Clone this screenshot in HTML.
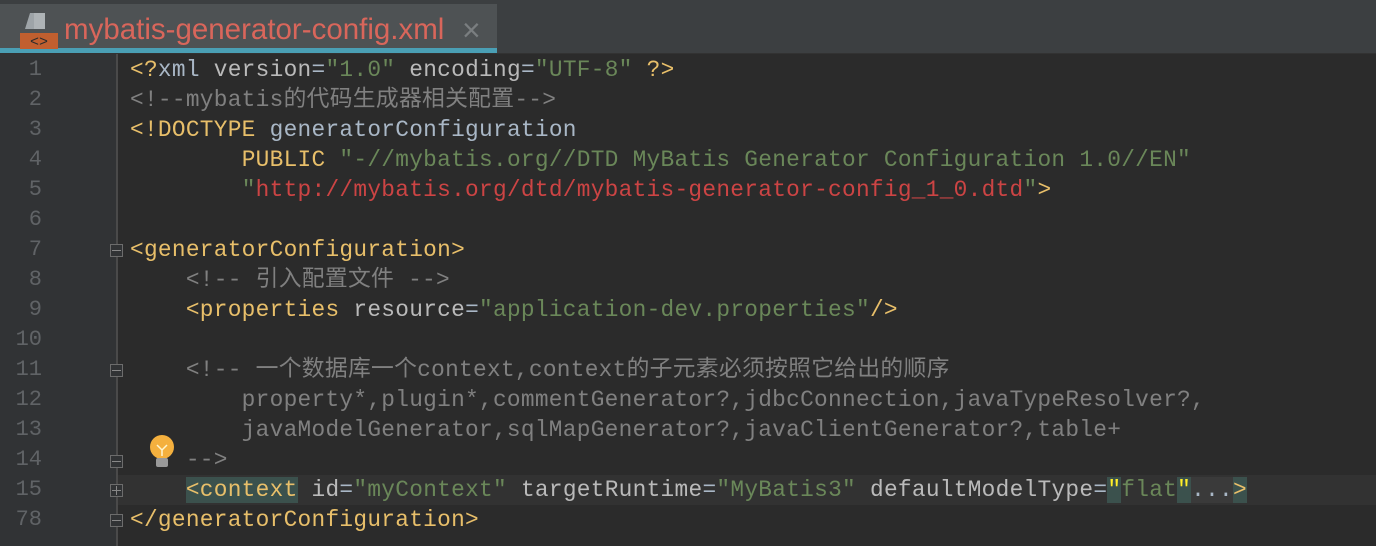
<!DOCTYPE html>
<html><head><meta charset="utf-8"><style>
*{margin:0;padding:0}
body{width:1376px;height:546px;background:#2b2b2b;overflow:hidden;position:relative;font-family:"Liberation Mono","Noto Sans CJK SC",monospace}
#tabbar{position:absolute;left:0;top:0;width:1376px;height:53px;background:#3c3f41;border-bottom:1px solid #323232}
#tab{position:absolute;left:0;top:4px;width:497px;height:45px;background:#4e5254}
#tabline{position:absolute;left:0;top:48px;width:497px;height:5px;background:#4a9fb5}
#tabtxt{position:absolute;left:64px;top:13px;font-family:"Liberation Sans",sans-serif;font-size:29.5px;color:#d9665b;line-height:34px}
#gutter{position:absolute;left:0;top:54px;width:117px;height:492px;background:#313335}
#gline{position:absolute;left:116px;top:54px;width:2px;height:492px;background:#4a4a4a}
.cur{position:absolute;left:118px;top:475px;width:1258px;height:30px;background:#323232}
.n{position:absolute;left:0;width:42px;text-align:right;color:#606366;font-size:22px;line-height:30px}
.l{position:absolute;left:130px;font-size:22.8px;letter-spacing:0.28px;line-height:30px;white-space:pre;color:#a9b7c6}
.t{color:#e8bf6a}.s{color:#6a8759}.c{color:#808080}.u{color:#cc4444}.a{color:#bababa}
.q{color:#ffef28;background:#3b514d}
.fold{position:absolute;left:110px;width:13px;height:13px;border:1px solid #6c6c6c;background:#313335;box-sizing:border-box}
</style></head><body>
<div id="tabbar"><div id="tab"></div><div id="tabline"></div>
<svg style="position:absolute;left:20px;top:12px" width="40" height="40">
<path d="M10 1h15v16H5z" fill="#9ea4a8"/><path d="M14 1h11v16H14z" fill="#aeb3b6"/>
<rect x="0" y="21" width="38" height="16" fill="#c15f2f"/>
<text x="19" y="34" font-family="Liberation Mono" font-size="15" fill="#2b2b2b" text-anchor="middle">&lt;&gt;</text></svg>
<div id="tabtxt">mybatis-generator-config.xml</div>
<div style="position:absolute;left:462px;top:12px;color:#7a7e80;font-size:32px;font-family:'Liberation Sans'">×</div>
</div>
<div id="gutter"></div><div id="gline"></div>
<div class="cur"></div>
<div class="n" style="top:55px">1</div><div class="n" style="top:85px">2</div><div class="n" style="top:115px">3</div><div class="n" style="top:145px">4</div><div class="n" style="top:175px">5</div><div class="n" style="top:205px">6</div><div class="n" style="top:235px">7</div><div class="n" style="top:265px">8</div><div class="n" style="top:295px">9</div><div class="n" style="top:325px">10</div><div class="n" style="top:355px">11</div><div class="n" style="top:385px">12</div><div class="n" style="top:415px">13</div><div class="n" style="top:445px">14</div><div class="n" style="top:475px">15</div><div class="n" style="top:505px">78</div>
<div class="fold" style="top:244px"></div><div class="fold" style="top:364px"></div><div class="fold" style="top:455px"></div><div class="fold" style="top:484px"></div><div class="fold" style="top:514px"></div>
<div style="position:absolute;left:112px;top:250px;width:9px;height:1px;background:#888"></div>
<div style="position:absolute;left:112px;top:370px;width:9px;height:1px;background:#888"></div>
<div style="position:absolute;left:112px;top:461px;width:9px;height:1px;background:#888"></div>
<div style="position:absolute;left:112px;top:490px;width:9px;height:1px;background:#888"></div><div style="position:absolute;left:116px;top:486px;width:1px;height:9px;background:#888"></div>
<div style="position:absolute;left:112px;top:520px;width:9px;height:1px;background:#888"></div>
<svg style="position:absolute;left:146px;top:434px" width="32" height="40"><circle cx="16" cy="13" r="12" fill="#f4b03e"/><path d="M11 11l5 5 5-5M16 16v6" stroke="#fff6d0" stroke-width="1.5" fill="none"/><rect x="10" y="24" width="12" height="9" rx="2" fill="#999"/></svg>
<div class="l" style="top:55px"><span class="t">&lt;?</span>xml <span class="a">version</span>=<span class="s">"1.0"</span> <span class="a">encoding</span>=<span class="s">"UTF-8"</span> <span class="t">?&gt;</span></div>
<div class="l c" style="top:85px">&lt;!--mybatis的代码生成器相关配置--&gt;</div>
<div class="l" style="top:115px"><span class="t">&lt;!DOCTYPE</span> generatorConfiguration</div>
<div class="l" style="top:145px">        <span class="t">PUBLIC</span> <span class="s">"-//mybatis.org//DTD MyBatis Generator Configuration 1.0//EN"</span></div>
<div class="l" style="top:175px">        <span class="s">"</span><span class="u">http://mybatis.org/dtd/mybatis-generator-config_1_0.dtd</span><span class="s">"</span><span class="t">&gt;</span></div>
<div class="l t" style="top:235px">&lt;generatorConfiguration&gt;</div>
<div class="l c" style="top:265px">    &lt;!-- 引入配置文件 --&gt;</div>
<div class="l" style="top:295px">    <span class="t">&lt;properties</span> <span class="a">resource</span>=<span class="s">"application-dev.properties"</span><span class="t">/&gt;</span></div>
<div class="l c" style="top:355px">    &lt;!-- 一个数据库一个context,context的子元素必须按照它给出的顺序</div>
<div class="l c" style="top:385px">        property*,plugin*,commentGenerator?,jdbcConnection,javaTypeResolver?,</div>
<div class="l c" style="top:415px">        javaModelGenerator,sqlMapGenerator?,javaClientGenerator?,table+</div>
<div class="l c" style="top:445px">    --&gt;</div>
<div class="l" style="top:475px">    <span class="t" style="background:#3b514d">&lt;context</span> <span class="a">id</span>=<span class="s">"myContext"</span> <span class="a">targetRuntime</span>=<span class="s">"MyBatis3"</span> <span class="a">defaultModelType</span>=<span class="q">"</span><span class="s">flat</span><span class="q">"</span><span style="background:#3a3a3a;color:#a9b7c6">...</span><span class="t" style="background:#3b514d">&gt;</span></div>
<div class="l t" style="top:505px">&lt;/generatorConfiguration&gt;</div>
</body></html>
